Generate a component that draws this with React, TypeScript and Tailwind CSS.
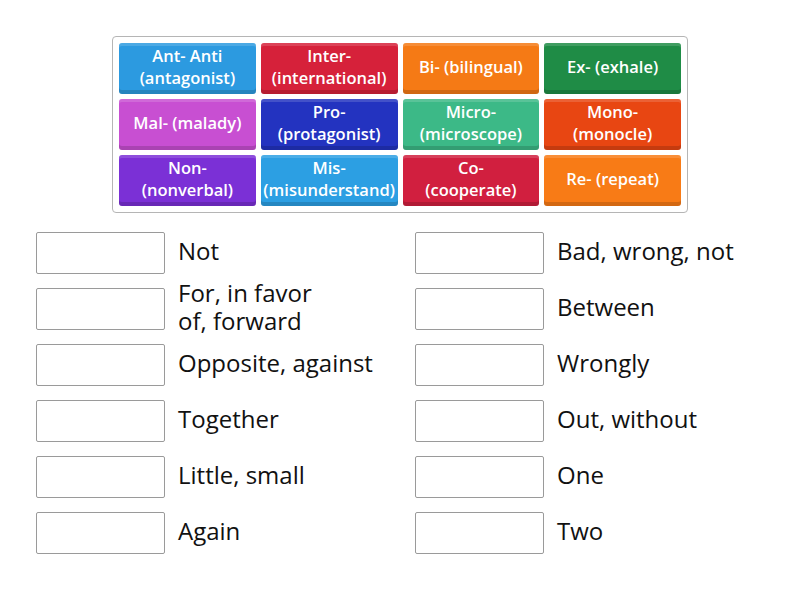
const TILES = [
  { label: ['Ant- Anti', '(antagonist)'], color: 'bg-[#2c9ae0]' },
  { label: ['Inter-', '(international)'], color: 'bg-[#d6213a]' },
  { label: ['Bi- (bilingual)'], color: 'bg-[#f57a15]' },
  { label: ['Ex- (exhale)'], color: 'bg-[#1f8c46]' },
  { label: ['Mal- (malady)'], color: 'bg-[#c84fd2]' },
  { label: ['Pro-', '(protagonist)'], color: 'bg-[#2333c0]' },
  { label: ['Micro-', '(microscope)'], color: 'bg-[#3cb987]' },
  { label: ['Mono-', '(monocle)'], color: 'bg-[#e84612]' },
  { label: ['Non-', '(nonverbal)'], color: 'bg-[#7b30d6]' },
  { label: ['Mis-', '(misunderstand)'], color: 'bg-[#2c9fe3]' },
  { label: ['Co-', '(cooperate)'], color: 'bg-[#d11f3f]' },
  { label: ['Re- (repeat)'], color: 'bg-[#f87b16]' },
]

const ROWS = [
  ['Not', 'Bad, wrong, not'],
  ['For, in favor of, forward', 'Between'],
  ['Opposite, against', 'Wrongly'],
  ['Together', 'Out, without'],
  ['Little, small', 'One'],
  ['Again', 'Two'],
]

function Tile({ label, color }: { label: string[]; color: string }) {
  return (
    <div
      className={`${color} h-[51px] pb-[3px] rounded-[3px] flex flex-col items-center justify-center text-white text-[16.5px] font-semibold leading-[22px] shadow-[inset_0_3px_0_rgba(255,255,255,0.15),inset_0_-4px_0_rgba(0,0,0,0.15)]`}
    >
      {label.map((l) => (
        <span key={l} className="whitespace-nowrap">{l}</span>
      ))}
    </div>
  )
}

function Answer({ text }: { text: string }) {
  const wraps = text.length > 20
  return (
    <div className="flex items-center h-[42px] gap-[13px]">
      <div className="w-[129px] h-[42px] shrink-0 border border-[#9a9a9a] rounded-[2px] bg-white" />
      <div
        className={`text-[24px] leading-[28px] text-[#111] pb-[4px] ${wraps ? 'w-[150px]' : 'whitespace-nowrap'}`}
      >
        {text}
      </div>
    </div>
  )
}

export default function App() {
  return (
    <div className="w-[800px] h-[600px] bg-white" style={{ fontFamily: '"Open Sans", sans-serif' }}>
      <div className="pt-[36px] pl-[112px]">
        <div className="w-[576px] border border-[#b5b5b5] rounded-[4px] p-[6px] grid grid-cols-4 gap-x-[5px] gap-y-[5px]">
          {TILES.map((t) => (
            <Tile key={t.label.join()} label={t.label} color={t.color} />
          ))}
        </div>
      </div>
      <div className="pl-[36px] pt-[19px] grid grid-cols-[379px_379px] gap-y-[14px]">
        {ROWS.map(([a, b]) => (
          <div key={a} className="contents">
            <Answer text={a} />
            <Answer text={b} />
          </div>
        ))}
      </div>
    </div>
  )
}
